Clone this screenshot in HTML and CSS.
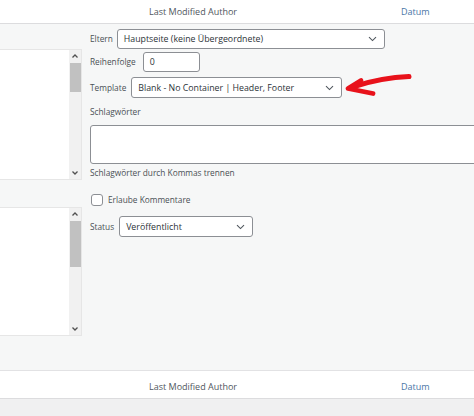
FILE: index.html
```html
<!DOCTYPE html>
<html lang="de">
<head>
<meta charset="utf-8">
<link rel="stylesheet" href="styles.css">
</head>
<body>
<div class="page">
  <div class="colhead">
    <span class="col-author">Last Modified Author</span>
    <span class="col-date">Datum</span>
  </div>
  <div class="main">
    <div class="side">
      <div class="listbox box1">
        <div class="list"></div>
        <div class="track">
          <svg class="arr" width="12" height="12" viewBox="0 0 12 12"><path d="M3.5 7.5 6 5 8.5 7.5" fill="none" stroke="#505050" stroke-width="1.3"/></svg>
          <div class="thumb t1"></div>
          <div class="spacer"></div>
          <svg class="arr" width="12" height="12" viewBox="0 0 12 12"><path d="M3.5 4.5 6 7 8.5 4.5" fill="none" stroke="#505050" stroke-width="1.3"/></svg>
        </div>
      </div>
      <div class="listbox box2">
        <div class="list"></div>
        <div class="track">
          <svg class="arr" width="12" height="12" viewBox="0 0 12 12"><path d="M3.5 7.5 6 5 8.5 7.5" fill="none" stroke="#505050" stroke-width="1.3"/></svg>
          <div class="thumb t2"></div>
          <div class="spacer"></div>
          <svg class="arr" width="12" height="12" viewBox="0 0 12 12"><path d="M3.5 4.5 6 7 8.5 4.5" fill="none" stroke="#505050" stroke-width="1.3"/></svg>
        </div>
      </div>
    </div>
    <div class="form">
      <div class="row r-parent">
        <span class="lbl">Eltern</span>
        <div class="sel sel-parent"><span>Hauptseite (keine Übergeordnete)</span><svg width="9" height="6" viewBox="0 0 9 6"><path d="M1 1.2 4.5 4.6 8 1.2" fill="none" stroke="#50575e" stroke-width="1.1"/></svg></div>
      </div>
      <div class="row r-order">
        <span class="lbl">Reihenfolge</span>
        <div class="inp">0</div>
      </div>
      <div class="row r-tpl">
        <span class="lbl">Template</span>
        <div class="sel sel-tpl"><span>Blank - No Container | Header, Footer</span><svg width="9" height="6" viewBox="0 0 9 6"><path d="M1 1.2 4.5 4.6 8 1.2" fill="none" stroke="#50575e" stroke-width="1.1"/></svg></div>
      </div>
      <div class="lbl tags-lbl">Schlagwörter</div>
      <div class="textarea"></div>
      <div class="lbl hint">Schlagwörter durch Kommas trennen</div>
      <div class="row r-check">
        <span class="check"></span>
        <span class="lbl">Erlaube Kommentare</span>
      </div>
      <div class="row r-status">
        <span class="lbl">Status</span>
        <div class="sel sel-status"><span>Veröffentlicht</span><svg width="9" height="6" viewBox="0 0 9 6"><path d="M1 1.2 4.5 4.6 8 1.2" fill="none" stroke="#50575e" stroke-width="1.1"/></svg></div>
      </div>
      <svg class="annot" width="74" height="32" viewBox="0 0 74 32">
        <path d="M70 8.5 C58 9 40 10.5 15 18.5" fill="none" stroke="#e8121b" stroke-width="5" stroke-linecap="round"/>
        <path d="M22 12.5 L9 20.5 L34 25.5" fill="none" stroke="#e8121b" stroke-width="4.8" stroke-linecap="round" stroke-linejoin="round"/>
      </svg>
    </div>
  </div>
  <div class="colhead foot">
    <span class="col-author">Last Modified Author</span>
    <span class="col-date">Datum</span>
  </div>
  <div class="bottom"></div>
</div>
</body>
</html>
```
FILE: styles.css
```css
html, body {
  margin: 0;
  padding: 0;
  overflow: hidden;
}
body {
  width: 474px;
  height: 416px;
  background: #f6f7f7;
  font-family: "Open Sans", "Noto Sans", sans-serif;
  color: #3c434a;
}
.page {
  display: flex;
  flex-direction: column;
  height: 416px;
}
.colhead {
  display: flex;
  align-items: center;
  height: 23px;
  background: #fff;
  border-bottom: 1px solid #dcdcde;
  padding-left: 149px;
  font-size: 9px;
  flex: none;
}
.col-author {
  width: 252px;
  color: #50575e;
}
.col-date {
  color: #4a76a6;
}
.main {
  display: flex;
  height: 345px;
  flex: none;
  position: relative;
}
.side {
  width: 82px;
  flex: none;
  display: flex;
  flex-direction: column;
}
.listbox {
  display: flex;
  background: #fff;
  border-top: 1px solid #e6e6e6;
  border-bottom: 1px solid #e6e6e6;
  border-right: 1px solid #e6e6e6;
  box-sizing: border-box;
}
.box1 {
  margin-top: 25px;
  height: 131px;
}
.box2 {
  margin-top: 27px;
  height: 129px;
}
.list {
  flex: 1;
}
.track {
  width: 12px;
  background: #f1f1f1;
  display: flex;
  flex-direction: column;
  align-items: stretch;
}
.arr {
  display: block;
  flex: none;
}
.thumb {
  background: #c1c1c1;
  margin: 1px 0 0 1px;
  flex: none;
}
.t1 { height: 29px; }
.t2 { height: 46px; }
.spacer { flex: 1; }
.form {
  padding: 5px 0 0 8px;
  display: flex;
  flex-direction: column;
  align-items: flex-start;
}
.row {
  display: flex;
  align-items: center;
}
.lbl {
  font-size: 8.3px;
  color: #4a5055;
  line-height: 12px;
}
.sel, .inp {
  box-sizing: border-box;
  background: #fff;
  border: 1px solid #8c8f94;
  border-radius: 3px;
  display: flex;
  align-items: center;
  justify-content: space-between;
  font-size: 8.8px;
  color: #2c3338;
  padding: 0 7px 0 6px;
}
.sel svg { flex: none; }
.r-parent { gap: 4px; }
.sel-parent { width: 268px; height: 20px; }
.r-order { gap: 7px; margin-top: 3px; }
.inp { width: 57px; height: 20px; }
.r-tpl { gap: 5px; margin-top: 5px; }
.sel-tpl { width: 211px; height: 21px; }
.tags-lbl { margin-top: 8px; }
.textarea {
  margin-top: 7px;
  width: 400px;
  height: 39px;
  box-sizing: border-box;
  background: #fff;
  border: 1px solid #8c8f94;
  border-radius: 3px;
}
.hint { margin-top: 3px; }
.r-check { gap: 5px; margin-top: 15px; }
.check {
  width: 12px;
  height: 12px;
  box-sizing: border-box;
  border: 1px solid #8c8f94;
  border-radius: 3px;
  background: #fff;
  margin-left: 1px;
}
.r-status { gap: 5px; margin-top: 10px; }
.sel-status { width: 134px; height: 21px; }
.annot {
  position: absolute;
  left: 339px;
  top: 44px;
}
.foot {
  margin-top: 1px;
  border-top: 1px solid #e2e2e4;
  height: 23px;
  padding-top: 4px;
  box-sizing: content-box;
}
.bottom {
  flex: 1;
  background: #f0f0f1;
}
```
